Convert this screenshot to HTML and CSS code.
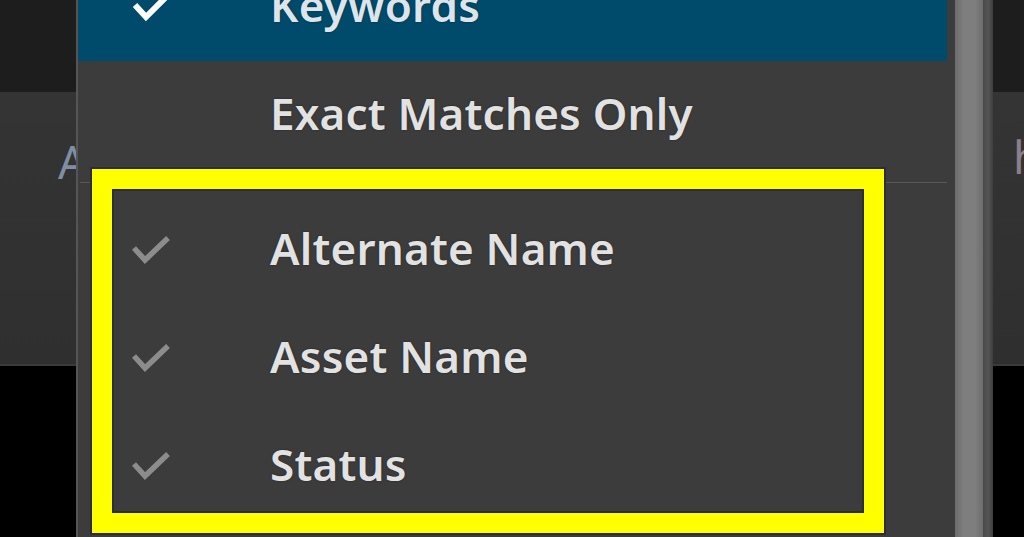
FILE: index.html
```html
<!DOCTYPE html>
<html lang="en">
<head>
<meta charset="utf-8">
<title>Search options menu</title>
<link rel="stylesheet" href="styles.css">
</head>
<body>
<div class="screen">
  <div class="side side-left">
    <div class="side-top"></div>
    <div class="side-mid"><span class="frag frag-left">A</span></div>
    <div class="side-bottom"></div>
  </div>
  <div class="menu">
    <ul class="menu-list">
      <li class="item item-active">
        <span class="check"><svg viewBox="0 0 40 30" width="40" height="30"><path d="M4 13 L15 25 L36 4" fill="none" stroke="#ffffff" stroke-width="6" stroke-linejoin="miter"/></svg></span>
        <span class="label">Keywords</span>
      </li>
      <li class="item">
        <span class="check"></span>
        <span class="label">Exact Matches Only</span>
      </li>
      <li class="sep"></li>
      <li class="item">
        <span class="check"><svg viewBox="0 0 40 30" width="40" height="30"><path d="M3 13 L14 25 L37 3" fill="none" stroke="#8c8c8c" stroke-width="5.5"/></svg></span>
        <span class="label">Alternate Name</span>
      </li>
      <li class="item">
        <span class="check"><svg viewBox="0 0 40 30" width="40" height="30"><path d="M3 13 L14 25 L37 3" fill="none" stroke="#8c8c8c" stroke-width="5.5"/></svg></span>
        <span class="label">Asset Name</span>
      </li>
      <li class="item">
        <span class="check"><svg viewBox="0 0 40 30" width="40" height="30"><path d="M3 13 L14 25 L37 3" fill="none" stroke="#8c8c8c" stroke-width="5.5"/></svg></span>
        <span class="label">Status</span>
      </li>
    </ul>
    <div class="highlight-box"></div>
  </div>
  <div class="scrollbar">
    <div class="thumb"></div>
    <div class="track"></div>
  </div>
  <div class="side side-right">
    <div class="side-top"></div>
    <div class="side-mid"><span class="frag frag-right">h</span></div>
    <div class="side-bottom"></div>
  </div>
</div>
</body>
</html>
```
FILE: styles.css
```css
* { box-sizing: border-box; }
html, body { margin: 0; padding: 0; }
body {
  width: 1024px;
  height: 537px;
  overflow: hidden;
  background: #000;
  font-family: "Noto Sans", "Open Sans", sans-serif;
}
.screen {
  display: flex;
  width: 1024px;
  height: 537px;
}
.side {
  display: flex;
  flex-direction: column;
  overflow: hidden;
}
.side-left { width: 76px; }
.side-right { width: 31px; }
.side-top { height: 92px; background: #1d1d1d; }
.side-mid {
  height: 274px;
  background: linear-gradient(#343434, #2f2f2f);
  border-bottom: 2px solid #3a3a3a;
  position: relative;
}
.side-bottom { flex: 1; background: #000; }
.frag {
  font-size: 45px;
  line-height: 1;
  color: #7f8ea3;
  display: block;
  white-space: nowrap;
}
.frag-left { padding: 47px 0 0 58px; }
.frag-right { padding: 42px 0 0 20px; color: #8a7f8c; }

.menu {
  position: relative;
  width: 879px;
  background: #3c3c3c;
  border-left: 2px solid #555;
  padding-right: 8px;
  overflow: hidden;
}
.menu-list {
  list-style: none;
  margin: -47px 0 0 0;
  padding: 0;
}
.item {
  height: 108px;
  display: flex;
  align-items: center;
  color: #e2e2e2;
  font-size: 44px;
  font-weight: 600;
  letter-spacing: 0.2px;
}
.item-active {
  background: #004a6b;
  color: #dde5ea;
}
.check {
  width: 192px;
  padding-left: 53px;
  display: flex;
  align-items: center;
}
.label {
  line-height: 1;
  padding-bottom: 4px;
  text-shadow: 0 0 2px rgba(0,0,0,0.5);
}
.sep {
  height: 27px;
  padding: 13px 0 13px 2px;
}
.sep::before {
  content: "";
  display: block;
  height: 1px;
  background: #585858;
}
.highlight-box {
  position: absolute;
  left: 14px;
  top: 169px;
  width: 792px;
  height: 364px;
  border: 20px solid #ffff00;
  box-shadow: 0 0 0 2px #2b2b42, inset 0 0 0 2px #2b2b42;
}

.scrollbar {
  display: flex;
  width: 38px;
}
.thumb {
  width: 28px;
  background: linear-gradient(90deg, #6c6c6c, #7e7e7e 30%, #7e7e7e 70%, #6e6e6e);
}
.track {
  width: 10px;
  background: linear-gradient(90deg, #4a4a4a, #555 50%, #3e3e3e);
}
```
